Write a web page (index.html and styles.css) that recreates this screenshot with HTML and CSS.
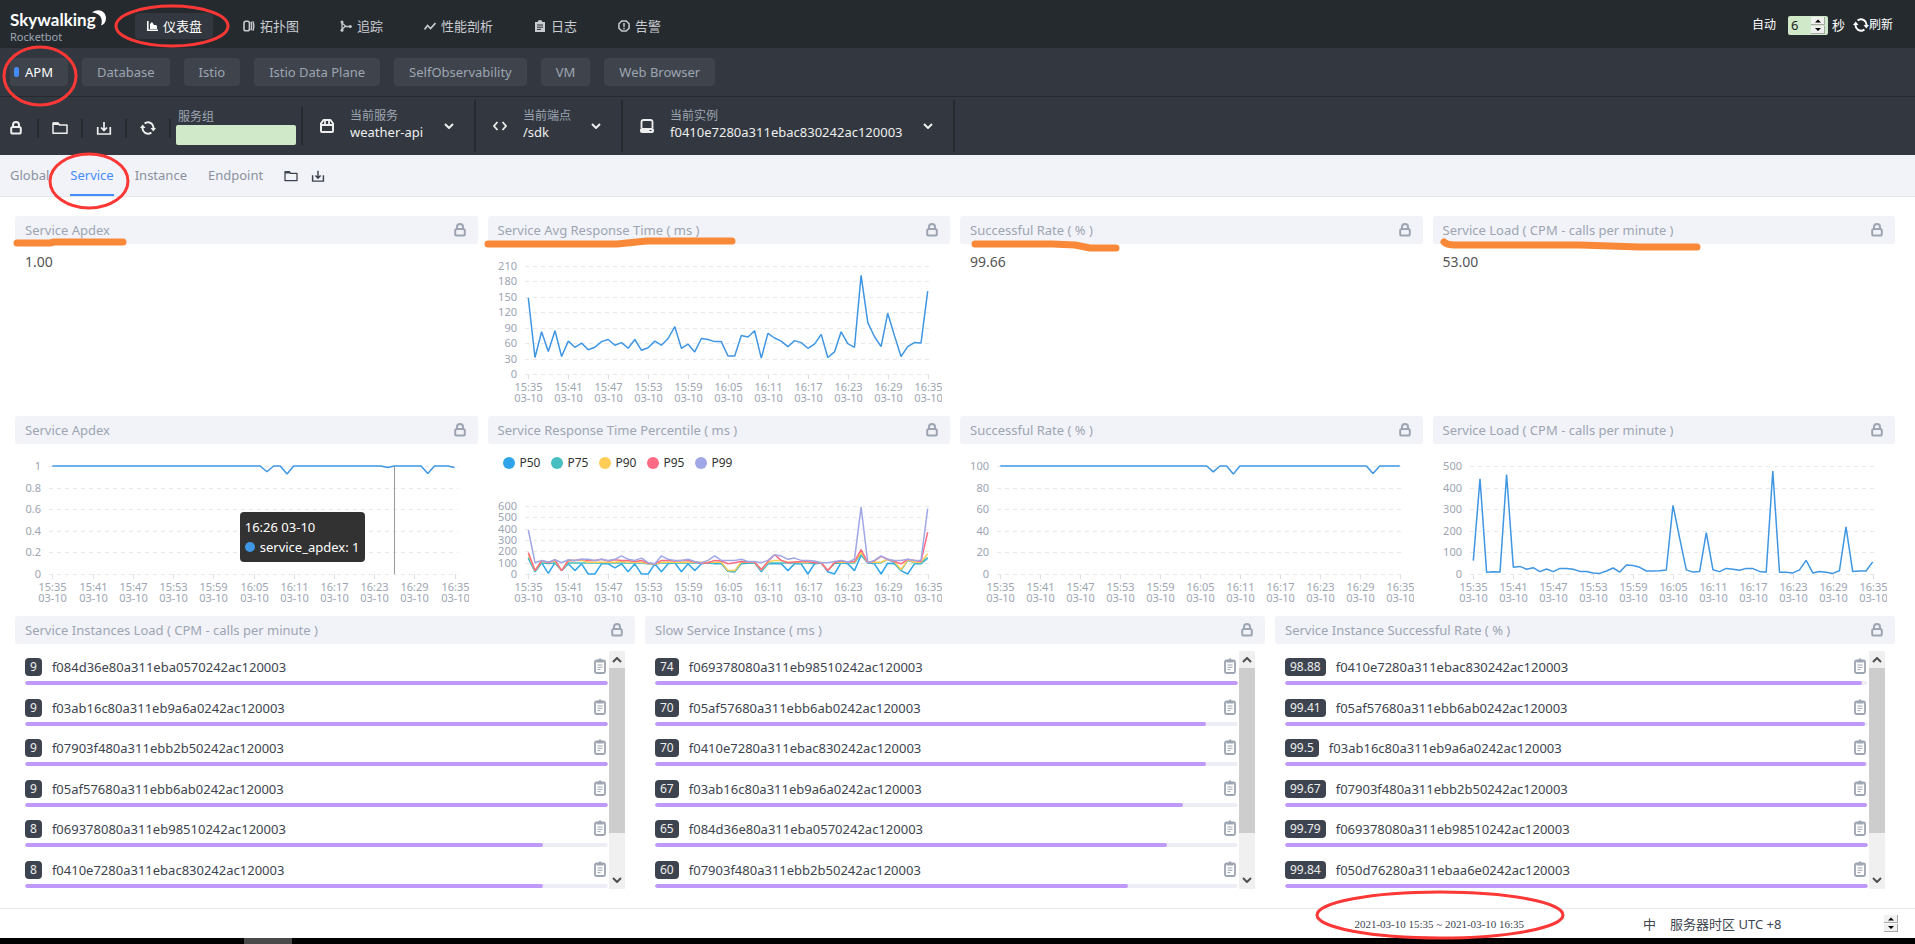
FILE: index.html
```html
<!DOCTYPE html>
<html lang="zh-CN">
<head>
<meta charset="utf-8">
<title>SkyWalking Rocketbot</title>
<link rel="stylesheet" href="styles.css">
</head>
<body>
<svg class="sprite" aria-hidden="true">
  <symbol id="i-lock" viewBox="0 0 12 14"><path d="M3 6V4a3 3 0 0 1 6 0v2" fill="none" stroke="currentColor" stroke-width="2"/><rect x="1.2" y="6" width="9.6" height="6.6" rx="1.6" fill="none" stroke="currentColor" stroke-width="2"/></symbol>
  <symbol id="i-folder" viewBox="0 0 16 14"><path d="M1 12V2h5l1.5 2H15v8.300H1z" fill="none" stroke="currentColor" stroke-width="1.500" stroke-linejoin="round"/><path d="M1 1.500h5.500L8 4H1z" fill="currentColor"/></symbol>
  <symbol id="i-down" viewBox="0 0 16 14"><path d="M1.700 6v7h12.600V6M8 1v8M5 6.500l3 3 3-3" fill="none" stroke="currentColor" stroke-width="1.700"/></symbol>
  <symbol id="i-sync" viewBox="0 0 16 14"><path d="M4.600 2.600A5.400 5.400 0 0 1 13.300 8M11.400 11.400A5.400 5.400 0 0 1 2.700 6" fill="none" stroke="currentColor" stroke-width="2"/><path d="M10.500 7H16l-2.700 3.600zM0 7h5.500L2.700 3.400z" fill="currentColor"/></symbol>
  <symbol id="i-chev" viewBox="0 0 10 6"><path d="M1 1l4 4 4-4" fill="none" stroke="currentColor" stroke-width="2"/></symbol>
  <symbol id="i-clip" viewBox="0 0 12 16"><rect x="1" y="2.500" width="10" height="12.500" rx="1.500" fill="none" stroke="currentColor" stroke-width="1.800"/><path d="M2.500 2h2Q4.700.3 6 .3T7.500 2h2v2.500h-7z" fill="currentColor"/><path d="M3.500 7h5M3.500 9.300h5M3.500 11.600h3" stroke="currentColor"/></symbol>
  <symbol id="i-spin" viewBox="0 0 14 17"><path d="M0 0h14v8H0zM0 9h14v8H0z" fill="#a8a8a8"/><path d="M0 0h13v7H0zM0 9h13v7H0z" fill="#f0f0f0"/><path d="M4 5.500h6l-3-3zM4 11h6l-3 3z" fill="#000"/></symbol>
</svg>

<header class="top">
  <a class="logo" href="#"><span class="logo-name">Skywalking</span><svg class="logo-moon" viewBox="0 0 14 16"><path d="M0 2.500C6-2.500 14 1 14 8c0 4-2 6.500-5 7.500C11.500 9 8 3 0 2.500z" fill="#fff"/></svg><span class="logo-sub">Rocketbot</span></a>
  <nav class="menu">
    <a class="menu-item active" href="#"><svg viewBox="0 0 12 12"><path d="M1.800 1v9.200H12" fill="none" stroke="currentColor" stroke-width="1.600"/><path d="M4 9V4l2-2 2 3h2l1 1v3z" fill="currentColor"/></svg>仪表盘</a>
    <a class="menu-item" href="#"><svg viewBox="0 0 12 12"><rect x="1" y="1.200" width="5.400" height="9.600" rx="1.800" fill="none" stroke="currentColor" stroke-width="1.600"/><path d="M8 1.800q1.200 4.200 0 8.400M9.800 1.200q2 4.800 0 9.600" fill="none" stroke="currentColor" stroke-width="1.400"/></svg>拓扑图</a>
    <a class="menu-item" href="#"><svg viewBox="0 0 12 12"><path d="M2 1v10M2.500 3.500l3 2.500-3 3M5.500 6.500H11" fill="none" stroke="currentColor" stroke-width="1.300"/><circle cx="2" cy="2" r="1.500" fill="currentColor"/><circle cx="2" cy="10.200" r="1.500" fill="currentColor"/><circle cx="10.300" cy="6.500" r="1.500" fill="currentColor"/></svg>追踪</a>
    <a class="menu-item" href="#"><svg viewBox="0 0 12 12"><path d="M.5 9.500l3-4 3 3 5-5.500" fill="none" stroke="currentColor" stroke-width="1.700"/></svg>性能剖析</a>
    <a class="menu-item" href="#"><svg viewBox="0 0 12 12"><path d="M1 2h2.500Q4 0 6 0t2.500 2H11v10H1z" fill="currentColor"/><path d="M3 5h6M3 7.200h6M3 9.400h4" stroke="#252a2f"/></svg>日志</a>
    <a class="menu-item" href="#"><svg viewBox="0 0 12 12"><path d="M3.800.9h4.400l2.900 2.900v4.400l-2.900 2.900H3.800L.9 8.200V3.800z" fill="none" stroke="currentColor" stroke-width="1.500"/><path d="M6 3v3.800M6 7.800v1.400" stroke="currentColor" stroke-width="1.500"/></svg>告警</a>
  </nav>
  <div class="auto">
    <label for="auto-sec">自动</label>
    <span class="number"><input id="auto-sec" type="number" value="6"><svg class="spin"><use href="#i-spin"/></svg></span>
    <span class="unit">秒</span>
    <button class="refresh" type="button"><svg class="ico"><use href="#i-sync"/></svg>刷新</button>
  </div>
</header>

<nav class="groups">
  <button class="group active" type="button">APM</button>
  <button class="group" type="button">Database</button>
  <button class="group" type="button">Istio</button>
  <button class="group" type="button">Istio Data Plane</button>
  <button class="group" type="button">SelfObservability</button>
  <button class="group" type="button">VM</button>
  <button class="group" type="button">Web Browser</button>
</nav>

<section class="bar">
  <div class="tools">
    <button type="button" aria-label="锁定"><svg class="ico"><use href="#i-lock"/></svg></button><i class="sep"></i>
    <button type="button" aria-label="导入"><svg class="ico"><use href="#i-folder"/></svg></button><i class="sep"></i>
    <button type="button" aria-label="导出"><svg class="ico"><use href="#i-down"/></svg></button><i class="sep"></i>
    <button type="button" aria-label="重载"><svg class="ico"><use href="#i-sync"/></svg></button><i class="sep"></i>
  </div>
  <div class="field"><label for="svc-group">服务组</label><input id="svc-group" type="text"></div>
  <i class="sep tall"></i>
  <div class="picker">
    <svg class="ico" viewBox="0 0 16 16"><path d="M4.500 2h7L14 5.500V13q0 1-1 1H3q-1 0-1-1V5.500z" fill="none" stroke="currentColor" stroke-width="2" stroke-linejoin="round"/><path d="M2 7h12M6 3v4M10 3v4" stroke="currentColor" stroke-width="1.800"/></svg>
    <div class="pick"><label for="p1">当前服务</label><select id="p1"><option>weather-api</option></select></div>
    <svg class="chev"><use href="#i-chev"/></svg>
  </div>
  <div class="picker">
    <svg class="ico" viewBox="0 0 16 16"><path d="M5.500 4L2 8l3.500 4M10.500 4L14 8l-3.500 4" fill="none" stroke="currentColor" stroke-width="1.800"/></svg>
    <div class="pick"><label for="p2">当前端点</label><select id="p2"><option>/sdk</option></select></div>
    <svg class="chev"><use href="#i-chev"/></svg>
  </div>
  <div class="picker">
    <svg class="ico" viewBox="0 0 16 16"><path d="M2.500 10V4q0-2 2-2h7q2 0 2 2v6" fill="none" stroke="currentColor" stroke-width="1.800"/><rect x="1" y="10" width="14" height="5" rx="2" fill="currentColor"/><path d="M10.500 12.500h2" stroke="#333840"/></svg>
    <div class="pick"><label for="p3">当前实例</label><select id="p3"><option>f0410e7280a311ebac830242ac120003</option></select></div>
    <svg class="chev"><use href="#i-chev"/></svg>
  </div>
</section>

<nav class="tabs">
  <a href="#">Global</a><a class="active" href="#">Service</a><a href="#">Instance</a><a href="#">Endpoint</a>
  <button type="button" aria-label="导入"><svg class="ico"><use href="#i-folder"/></svg></button>
  <button type="button" aria-label="导出"><svg class="ico"><use href="#i-down"/></svg></button>
</nav>

<main>
  <div class="row four">
    <section class="card"><h2>Service Apdex<svg class="lock"><use href="#i-lock"/></svg></h2><div class="body value">1.00</div></section>
    <section class="card"><h2>Service Avg Response Time ( ms )<svg class="lock"><use href="#i-lock"/></svg></h2><div class="body chart" data-chart="avg"></div></section>
    <section class="card"><h2>Successful Rate ( % )<svg class="lock"><use href="#i-lock"/></svg></h2><div class="body value">99.66</div></section>
    <section class="card"><h2>Service Load ( CPM - calls per minute )<svg class="lock"><use href="#i-lock"/></svg></h2><div class="body value">53.00</div></section>
  </div>
  <div class="row four">
    <section class="card"><h2>Service Apdex<svg class="lock"><use href="#i-lock"/></svg></h2><div class="body chart" data-chart="apdex"><div class="tip"><span>16:26 03-10</span><span class="tip-line"><i class="dot"></i>service_apdex: 1</span></div></div></section>
    <section class="card"><h2>Service Response Time Percentile ( ms )<svg class="lock"><use href="#i-lock"/></svg></h2><div class="body chart" data-chart="pct"><ul class="legend"><li class="p50">P50</li><li class="p75">P75</li><li class="p90">P90</li><li class="p95">P95</li><li class="p99">P99</li></ul></div></section>
    <section class="card"><h2>Successful Rate ( % )<svg class="lock"><use href="#i-lock"/></svg></h2><div class="body chart" data-chart="rate"></div></section>
    <section class="card"><h2>Service Load ( CPM - calls per minute )<svg class="lock"><use href="#i-lock"/></svg></h2><div class="body chart" data-chart="load"></div></section>
  </div>
  <div class="row three">
    <section class="card"><h2>Service Instances Load ( CPM - calls per minute )<svg class="lock"><use href="#i-lock"/></svg></h2>
      <div class="list"><ol>
        <li><b>9</b><span>f084d36e80a311eba0570242ac120003</span><svg class="clip"><use href="#i-clip"/></svg><progress max="9" value="9"></progress></li>
        <li><b>9</b><span>f03ab16c80a311eb9a6a0242ac120003</span><svg class="clip"><use href="#i-clip"/></svg><progress max="9" value="9"></progress></li>
        <li><b>9</b><span>f07903f480a311ebb2b50242ac120003</span><svg class="clip"><use href="#i-clip"/></svg><progress max="9" value="9"></progress></li>
        <li><b>9</b><span>f05af57680a311ebb6ab0242ac120003</span><svg class="clip"><use href="#i-clip"/></svg><progress max="9" value="9"></progress></li>
        <li><b>8</b><span>f069378080a311eb98510242ac120003</span><svg class="clip"><use href="#i-clip"/></svg><progress max="9" value="8"></progress></li>
        <li><b>8</b><span>f0410e7280a311ebac830242ac120003</span><svg class="clip"><use href="#i-clip"/></svg><progress max="9" value="8"></progress></li>
      </ol><div class="scroll"><svg class="chev"><use href="#i-chev"/></svg><i class="thumb"></i><svg class="chev"><use href="#i-chev"/></svg></div></div>
    </section>
    <section class="card"><h2>Slow Service Instance ( ms )<svg class="lock"><use href="#i-lock"/></svg></h2>
      <div class="list"><ol>
        <li><b>74</b><span>f069378080a311eb98510242ac120003</span><svg class="clip"><use href="#i-clip"/></svg><progress max="74" value="74"></progress></li>
        <li><b>70</b><span>f05af57680a311ebb6ab0242ac120003</span><svg class="clip"><use href="#i-clip"/></svg><progress max="74" value="70"></progress></li>
        <li><b>70</b><span>f0410e7280a311ebac830242ac120003</span><svg class="clip"><use href="#i-clip"/></svg><progress max="74" value="70"></progress></li>
        <li><b>67</b><span>f03ab16c80a311eb9a6a0242ac120003</span><svg class="clip"><use href="#i-clip"/></svg><progress max="74" value="67"></progress></li>
        <li><b>65</b><span>f084d36e80a311eba0570242ac120003</span><svg class="clip"><use href="#i-clip"/></svg><progress max="74" value="65"></progress></li>
        <li><b>60</b><span>f07903f480a311ebb2b50242ac120003</span><svg class="clip"><use href="#i-clip"/></svg><progress max="74" value="60"></progress></li>
      </ol><div class="scroll"><svg class="chev"><use href="#i-chev"/></svg><i class="thumb"></i><svg class="chev"><use href="#i-chev"/></svg></div></div>
    </section>
    <section class="card"><h2>Service Instance Successful Rate ( % )<svg class="lock"><use href="#i-lock"/></svg></h2>
      <div class="list"><ol>
        <li><b>98.88</b><span>f0410e7280a311ebac830242ac120003</span><svg class="clip"><use href="#i-clip"/></svg><progress max="99.84" value="98.88"></progress></li>
        <li><b>99.41</b><span>f05af57680a311ebb6ab0242ac120003</span><svg class="clip"><use href="#i-clip"/></svg><progress max="99.84" value="99.41"></progress></li>
        <li><b>99.5</b><span>f03ab16c80a311eb9a6a0242ac120003</span><svg class="clip"><use href="#i-clip"/></svg><progress max="99.84" value="99.5"></progress></li>
        <li><b>99.67</b><span>f07903f480a311ebb2b50242ac120003</span><svg class="clip"><use href="#i-clip"/></svg><progress max="99.84" value="99.67"></progress></li>
        <li><b>99.79</b><span>f069378080a311eb98510242ac120003</span><svg class="clip"><use href="#i-clip"/></svg><progress max="99.84" value="99.79"></progress></li>
        <li><b>99.84</b><span>f050d76280a311ebaa6e0242ac120003</span><svg class="clip"><use href="#i-clip"/></svg><progress max="99.84" value="99.84"></progress></li>
      </ol><div class="scroll"><svg class="chev"><use href="#i-chev"/></svg><i class="thumb"></i><svg class="chev"><use href="#i-chev"/></svg></div></div>
    </section>
  </div>
</main>

<footer class="foot">
  <button class="range" type="button">2021-03-10 15:35 ~ 2021-03-10 16:35</button>
  <button class="lang" type="button">中</button>
  <label for="utc">服务器时区 UTC +</label>
  <span class="zone"><input id="utc" type="number" value="8"><svg class="spin"><use href="#i-spin"/></svg></span>
</footer>
<div class="taskbar"><i></i></div>

<svg class="marks" aria-hidden="true">
  <g class="red"><ellipse cx="172" cy="26" rx="56" ry="20"/><ellipse cx="40" cy="76" rx="36" ry="29"/><ellipse cx="89" cy="181" rx="39" ry="27"/><ellipse cx="1440" cy="915" rx="123" ry="23"/></g>
  <g class="orange"><path d="M17 243H50L54 242H123"/><path d="M488 244H617L647 241H732"/><path d="M975 244H1052L1075 245L1090 248H1116"/><path d="M1444 242Q1447 245 1455 245H1580L1640 247H1697"/></g>
</svg>
<script src="charts.js"></script>
</body>
</html>
```
FILE: styles.css
```css
* { box-sizing: border-box; }
body {
  margin: 0; min-height: 100vh; position: relative;
  display: flex; flex-direction: column;
  font: 13px/18px "Noto Sans", "Noto Sans CJK SC", sans-serif;
  color: #3d444f; background: #fff;
}
a { color: inherit; text-decoration: none; }
button { font: inherit; color: inherit; background: none; border: 0; padding: 0; }
input, select { font: inherit; border: 0; padding: 0; margin: 0; outline: 0; appearance: none; }
input[type="number"] { appearance: textfield; }
input::-webkit-inner-spin-button { appearance: none; margin: 0; }
svg { display: block; flex: none; }
.sprite { position: absolute; width: 0; height: 0; }
.ico { width: 16px; height: 14px; }
.chev { width: 10px; height: 6px; }
.spin { width: 14px; height: 17px; }

.top { display: flex; align-items: center; height: 48px; padding: 0 22px 0 10px; background: #252a2f; color: #fff; }
.logo { display: grid; grid-template-columns: auto 1fr; width: 125px; padding-top: 6px; }
.logo-name { font: bold 17px/20px Lato, sans-serif; }
.logo-moon { width: 14px; height: 16px; margin-left: -4px; }
.logo-sub { grid-column: 1 / 3; font-size: 11px; line-height: 14px; color: #9da5b2; }
.menu { display: flex; gap: 19px; flex: 1; padding-top: 3px; }
.menu-item { display: flex; align-items: center; gap: 5px; height: 26px; padding: 0 11px; border-radius: 4px; color: #c8cbd0; }
.menu-item.active { background: #333840; color: #fff; }
.menu-item svg { width: 12px; height: 12px; }
.auto { display: flex; align-items: center; padding-top: 2px; font-size: 12px; }
.number { display: flex; align-items: center; justify-content: space-between; width: 40px; height: 19px; margin: 0 4px 0 12px; padding: 0 3px; border-radius: 2px; background: #cfe9c9; }
.number input { width: 16px; background: none; font-size: 13px; color: #222; }
.unit { font-size: 13px; }
.refresh { display: flex; align-items: center; margin-left: 8px; }

.groups { display: flex; gap: 14px; height: 49px; padding: 10px; background: #333840; border-bottom: 1px solid #252a2f; }
.group { height: 28px; padding: 0 15px; border-radius: 4px; background: #3f444c; color: #9da5b2; }
.group.active { display: flex; align-items: center; gap: 6px; padding: 0 15px 0 4px; color: #fff; }
.group.active::before { content: ""; width: 5px; height: 10px; border-radius: 3px; background: #448dfe; }

.bar { display: flex; align-items: center; height: 58px; padding-left: 8px; background: #333840; color: #eee; }
.tools { display: flex; align-items: center; gap: 13px; padding-top: 4px; }
.sep { width: 2px; height: 19px; background: #252a2f; }
.sep.tall { height: 38px; margin-left: 5px; }
.field { display: flex; flex-direction: column; width: 120px; margin-left: 5px; padding-top: 2px; }
.field label, .pick label { font-size: 12px; line-height: 16px; color: #9da5b2; }
.field label { padding-left: 2px; }
.field input { width: 100%; height: 20px; border-radius: 2px; background: #cfe9c9; }
.picker { display: flex; align-items: center; height: 52px; padding: 0 20px 0 16px; border-right: 2px solid #252a2f; }
.picker .ico { height: 16px; margin-right: 15px; }
.picker .chev { margin-left: 20px; }
.pick { display: flex; flex-direction: column; align-items: flex-start; padding-bottom: 4px; }
.pick select { height: 16px; line-height: 16px; background: none; color: #eee; }

.tabs { display: flex; align-items: center; gap: 21px; height: 42px; padding: 0 10px; background: #f2f3f9; border-bottom: 1px solid #e6e8ec; color: #8a919c; }
.tabs a { height: 41px; line-height: 40px; }
.tabs .active { color: #448dfe; border-bottom: 2px solid #448dfe; line-height: 40px; }
.tabs button { margin-right: -8px; color: #3d444f; }
.tabs .ico { width: 14px; height: 12px; }

main { flex: 1; display: flex; flex-direction: column; gap: 10px; padding: 19px 20px 19px 15px; }
.row { display: grid; gap: 10px; }
.four { grid-template-columns: repeat(4, minmax(0, 1fr)); }
.three { grid-template-columns: repeat(3, minmax(0, 1fr)); }
.card h2 { display: flex; align-items: center; justify-content: space-between; height: 28px; margin: 0; padding: 0 12px 0 10px; border-radius: 3px; background: #f2f3f9; color: #9da5b2; font-size: 13px; font-weight: normal; }
.lock { width: 12px; height: 14px; }
.body { height: 162px; }
.value { padding: 9px 10px; font-size: 14px; color: #555; }
.chart { position: relative; }
.plot { width: 100%; height: 162px; overflow: hidden; font-size: 11px; }
.plot text { fill: #9da5b2; }
.grid { stroke: #e8e8ea; stroke-dasharray: 4 4; }
.tick { stroke: #e0e0e4; }
.pointer { stroke: #999; }
.line { fill: none; stroke-width: 1.5; stroke-linejoin: bevel; }
.legend { position: absolute; top: 10px; left: 15px; display: flex; gap: 10px; margin: 0; padding: 0; list-style: none; font-size: 12px; color: #333; }
.legend li { display: flex; align-items: center; gap: 5px; }
.legend li::before { content: ""; width: 12px; height: 12px; border-radius: 50%; background: currentColor; }
.legend .p50::before { background: #30a4eb; }
.legend .p75::before { background: #45bfc0; }
.legend .p90::before { background: #ffcc55; }
.legend .p95::before { background: #ff6a84; }
.legend .p99::before { background: #a0a7e6; }
.tip { position: absolute; top: 68px; right: 113px; display: flex; flex-direction: column; padding: 5px; border-radius: 4px; background: #323232; color: #fff; line-height: 20px; white-space: nowrap; }
.tip-line { display: flex; align-items: center; gap: 5px; }
.dot { width: 10px; height: 10px; border-radius: 50%; background: #3f96e3; }

.list { display: flex; height: 238px; margin: 7px 10px 0; }
.list ol { flex: 1; display: flex; flex-direction: column; justify-content: space-between; margin: 0 1px 0 0; padding: 7px 0 1px; list-style: none; }
.list li { display: grid; grid-template-columns: auto 1fr auto; column-gap: 10px; row-gap: 5px; }
.list b { height: 18px; padding: 0 5px; border-radius: 4px; background: #3d444f; color: #eee; font-weight: normal; font-size: 12px; }
.clip { width: 12px; height: 16px; margin-right: 2px; color: #9da5b2; }
progress { grid-column: 1 / 4; display: block; width: 100%; height: 4px; appearance: none; border: 0; border-radius: 2px; overflow: hidden; }
progress::-webkit-progress-bar { background: #ededf6; border-radius: 2px; }
progress::-webkit-progress-value { background: #bf99f8; border-radius: 2px; }
.scroll { display: flex; flex-direction: column; align-items: center; width: 16px; padding: 6px 0; background: #f0f0f0; color: #505050; }
.scroll .chev:first-child { transform: rotate(180deg); }
.scroll .thumb { width: 16px; height: 165px; margin: 5px 0 auto; background: #cdcdcd; }

.foot { display: flex; align-items: center; justify-content: flex-end; height: 30px; padding-right: 17px; border-top: 1px solid #e6e8ec; }
.range { margin-right: 119px; font: 11px/18px "Liberation Serif", serif; }
.lang { margin-right: 14px; }
.zone { display: flex; align-items: center; width: 124px; justify-content: space-between; }
.zone input { width: 60px; background: none; color: #3d444f; }
.taskbar { height: 6px; padding-left: 244px; background: #000; }
.taskbar i { display: block; width: 48px; height: 6px; background: #4a4a4a; }

.marks { position: absolute; top: 0; left: 0; width: 100%; height: 100%; pointer-events: none; fill: none; }
.red { stroke: #fb3836; stroke-width: 3; }
.orange { stroke: #f98939; stroke-width: 7; stroke-linecap: round; stroke-linejoin: round; }
```
FILE: charts.js
```js
const flat = (base, dips) => Array.from({ length: 61 }, (_, i) => dips[i] ?? base);

const p50 = [140,20,100,5,100,30,90,30,90,0,0,90,90,55,90,20,90,0,0,90,20,90,100,20,90,30,90,100,90,90,25,20,90,95,100,20,90,90,90,30,90,90,0,90,100,20,0,100,90,30,165,100,90,0,95,90,30,0,90,90,140];
const p75 = flat(98, { 0: 145, 1: 22, 3: 92, 5: 30, 18: 88, 19: 86, 30: 25, 31: 20, 35: 30, 43: 90, 45: 28, 46: 92, 50: 170, 54: 130, 56: 30, 57: 120, 60: 145 });
const p90 = flat(104, { 0: 175, 1: 30, 2: 115, 4: 115, 5: 30, 6: 115, 7: 118, 8: 120, 14: 110, 18: 92, 19: 88, 30: 30, 31: 30, 35: 35, 37: 120, 38: 118, 45: 30, 50: 190, 54: 130, 55: 110, 56: 40, 57: 125, 60: 180 });
const p95 = [190,30,118,100,125,30,120,120,130,120,120,130,115,125,120,120,110,120,95,90,120,120,115,120,120,105,95,100,120,115,90,100,110,105,105,40,110,170,120,100,105,110,110,100,100,30,100,115,105,110,215,100,115,155,130,110,90,130,120,110,370];
const p99 = [388,100,120,105,125,100,125,120,130,130,120,130,120,130,160,130,120,140,100,90,160,130,120,120,130,110,100,120,160,120,120,120,130,110,110,100,120,170,160,130,140,120,120,115,100,100,110,120,105,130,590,100,120,160,130,120,120,130,120,120,578];

const charts = {
  avg: { left: 37, top: 22, max: 210, step: 30, series: [["#3f96e3", [148,32,82,44,84,34,64,52,60,47,52,63,67,56,61,50,67,46,51,64,56,69,92,50,58,43,69,67,63,63,35,35,75,72,84,31,79,70,64,53,65,61,50,58,77,32,43,82,59,52,192,100,73,53,118,75,34,53,61,60,161]]] },
  apdex: { left: 34, top: 22, max: 1, step: 0.2, pointer: 51, series: [["#3f96e3", flat(1, { 32: 0.947, 35: 0.925, 50: 0.987, 56: 0.93, 60: 0.985 })]] },
  pct: { left: 37, top: 62, max: 600, step: 100, series: [["#30a4eb", p50], ["#45bfc0", p75], ["#ffcc55", p90], ["#ff6a84", p95], ["#a0a7e6", p99]] },
  rate: { left: 37, top: 22, max: 100, step: 20, series: [["#3f96e3", flat(100, { 32: 94.5, 35: 92.5, 56: 93 })]] },
  load: { left: 37, top: 22, max: 500, step: 100, series: [["#3f96e3", [62,441,8,10,9,460,31,35,22,29,11,23,11,26,26,22,12,12,5,3,14,28,9,42,39,31,14,14,15,19,318,165,19,9,11,191,20,11,26,22,17,26,25,12,8,477,8,8,5,19,63,5,12,8,3,15,218,11,14,14,56]]] }
};

const BASE = 130;

function draw(host) {
  const c = charts[host.dataset.chart];
  const width = host.clientWidth;
  const right = width - 20;
  const band = (right - c.left) / 61;
  const x = i => c.left + band * (i + 0.5);
  const y = v => BASE - (v / c.max) * (BASE - c.top);
  let out = "";
  const rows = Math.round(c.max / c.step);
  for (let i = 0; i <= rows; i++) {
    const v = +(i * c.step).toFixed(1);
    const gy = Math.round(y(v)) + 0.5;
    out += `<line class="grid" x1="${c.left}" x2="${right}" y1="${gy}" y2="${gy}"/>`;
    out += `<text x="${c.left - 8}" y="${gy + 3}" text-anchor="end">${v}</text>`;
  }
  for (let i = 0; i <= 60; i += 6) {
    const m = 35 + i;
    const time = `${15 + Math.floor(m / 60)}:${String(m % 60).padStart(2, "0")}`;
    const tx = Math.round(x(i)) + 0.5;
    out += `<line class="tick" x1="${tx}" x2="${tx}" y1="${BASE}" y2="${BASE + 5}"/>`;
    out += `<text y="147" text-anchor="middle"><tspan x="${tx}">${time}</tspan><tspan x="${tx}" dy="11">03-10</tspan></text>`;
  }
  for (const [color, data] of c.series) {
    out += `<polyline class="line" stroke="${color}" points="${data.map((v, i) => x(i).toFixed(1) + "," + y(v).toFixed(1)).join(" ")}"/>`;
  }
  if (c.pointer) {
    const px = Math.round(x(c.pointer)) + 0.5;
    out += `<line class="pointer" x1="${px}" x2="${px}" y1="${c.top}" y2="${BASE}"/>`;
  }
  host.querySelector(".plot")?.remove();
  host.insertAdjacentHTML("afterbegin", `<svg class="plot" viewBox="0 0 ${width - 9} 162" preserveAspectRatio="xMinYMin" style="width:${width - 9}px">${out}</svg>`);
}

const drawAll = () => document.querySelectorAll("[data-chart]").forEach(draw);
drawAll();
addEventListener("resize", drawAll);
```
